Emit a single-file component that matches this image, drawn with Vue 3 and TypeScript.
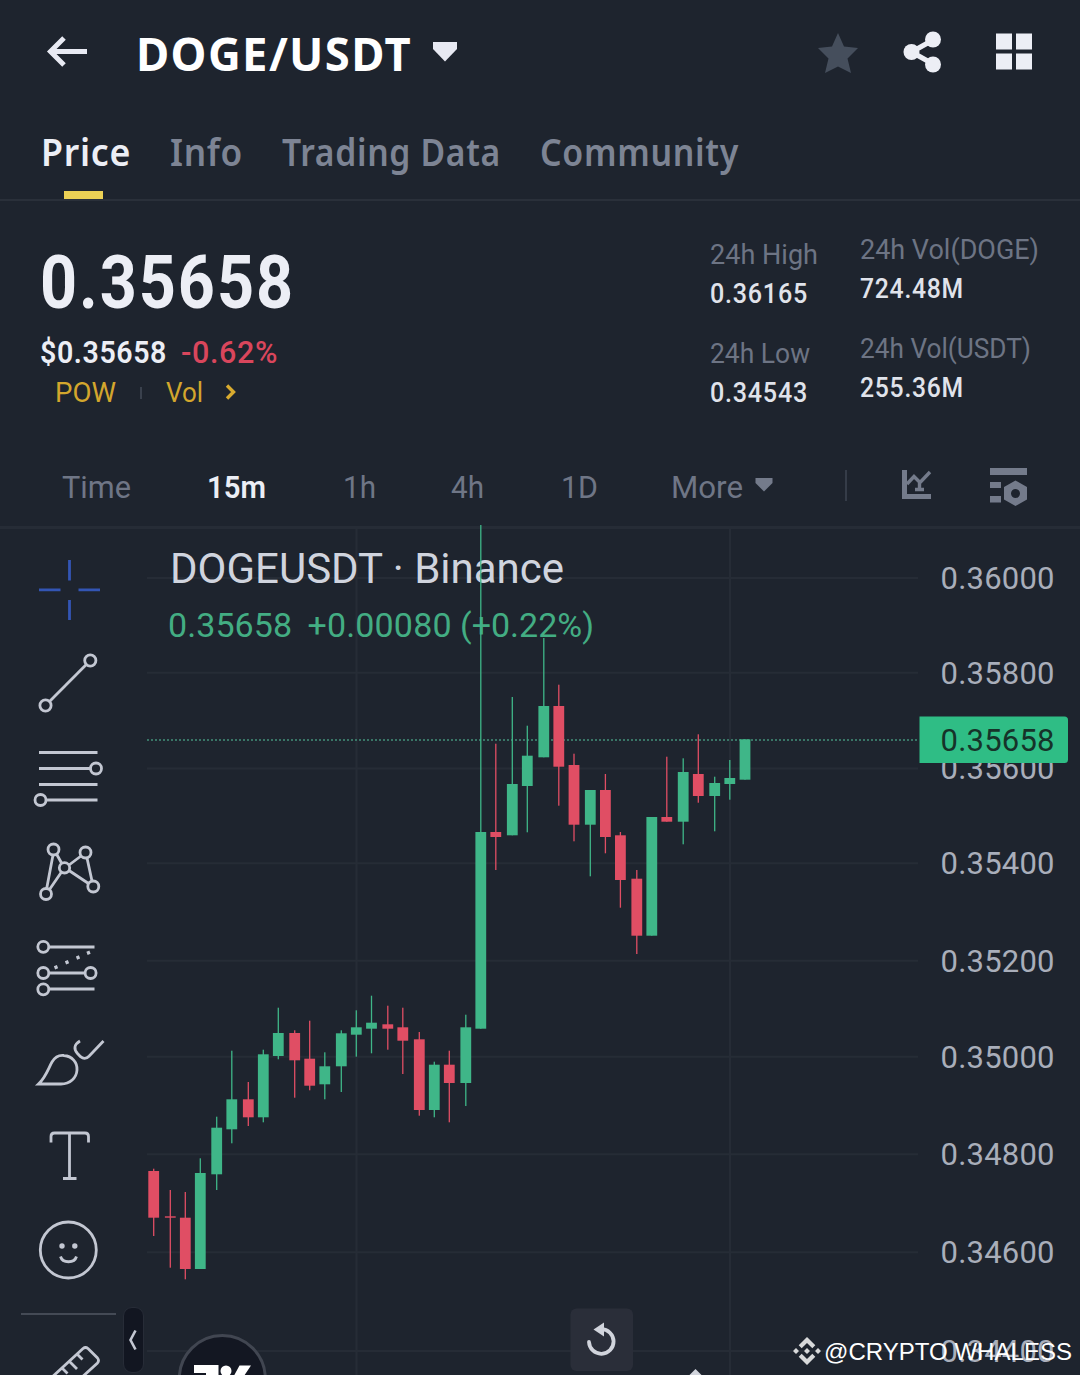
<script setup lang="ts">
import type { Directive } from 'vue'

/* Condenses or widens a label so that it takes exactly the given width in the flow. */
const vFit: Directive<HTMLElement, number> = {
  mounted(el, { value }) {
    const natural = el.getBoundingClientRect().width
    if (!natural) return
    el.style.transform = `scaleX(${value / natural})`
    el.style.marginRight = `${value - natural}px`
  },
}

type Side = 'up' | 'down'
interface Candle { x: number; high: number; top: number; bottom: number; low: number; side: Side }

const rows: [number, number, number, number, number, Side][] = [
  [153.7, 1168.7, 1171, 1217.7, 1236, 'down'],
  [170.3, 1190, 1216.3, 1217.7, 1267.7, 'down'],
  [185.3, 1192, 1217.7, 1269, 1279.3, 'down'],
  [200.3, 1158.3, 1173, 1269, 1269, 'up'],
  [216.7, 1116.7, 1127.7, 1174.3, 1190, 'up'],
  [231.8, 1050.7, 1099.3, 1129.3, 1143.3, 'up'],
  [248.3, 1082, 1099.3, 1117.3, 1126, 'down'],
  [263.3, 1049.7, 1054.3, 1117.3, 1122.3, 'up'],
  [278.3, 1007.7, 1033, 1056, 1059.3, 'up'],
  [294.7, 1030.3, 1033, 1060.3, 1097.7, 'down'],
  [309.7, 1020.7, 1058.7, 1085.7, 1090.3, 'down'],
  [324.8, 1052.3, 1066.3, 1084.3, 1099.3, 'up'],
  [341.3, 1030.3, 1033.3, 1066.3, 1092, 'up'],
  [356.3, 1010.3, 1027.3, 1034.7, 1056.7, 'up'],
  [371.5, 995.7, 1022.7, 1028.7, 1053.3, 'up'],
  [387.8, 1005.7, 1024.3, 1028.7, 1049.7, 'down'],
  [402.8, 1007.7, 1027.3, 1040.7, 1074, 'down'],
  [419.3, 1032, 1039.3, 1110, 1115.7, 'down'],
  [434.3, 1061.7, 1064.7, 1110, 1117.3, 'up'],
  [449.3, 1050.7, 1064.7, 1083, 1122.3, 'down'],
  [465.8, 1014.7, 1027.3, 1083, 1106, 'up'],
  [480.8, 525, 832, 1028.7, 1028.7, 'up'],
  [495.8, 743.7, 832, 837, 870, 'down'],
  [512.3, 697, 784, 835.3, 835.3, 'up'],
  [527.3, 725.7, 755.7, 786, 832.3, 'up'],
  [543.8, 638, 706, 757.3, 757.3, 'up'],
  [558.8, 684.7, 706, 766.7, 805.7, 'down'],
  [574, 753.7, 765, 824.7, 841.3, 'down'],
  [590.3, 790, 790, 824.7, 876.3, 'up'],
  [605.4, 774, 790, 837, 853.3, 'down'],
  [620.4, 832, 835.3, 880, 907.7, 'down'],
  [636.8, 870, 878.7, 935.7, 954, 'down'],
  [651.8, 817, 817, 935.7, 935.7, 'up'],
  [666.8, 756.7, 817, 821.7, 821.7, 'down'],
  [683.2, 758.3, 772, 821.7, 844.3, 'up'],
  [698.3, 734.3, 774, 796, 802.7, 'down'],
  [714.7, 776.7, 783, 796, 831.3, 'up'],
  [729.8, 760, 778, 784, 799.7, 'up'],
  [745, 739.3, 739.3, 779.7, 779.7, 'up'],
]
const candles: Candle[] = rows.map(([x, high, top, bottom, low, side]) => ({ x, high, top, bottom, low, side }))

const levels = [
  { y: 578, label: '0.36000' },
  { y: 672.7, label: '0.35800' },
  { y: 768.5, label: '0.35600' },
  { y: 863.3, label: '0.35400' },
  { y: 960.7, label: '0.35200' },
  { y: 1056.7, label: '0.35000' },
  { y: 1154.2, label: '0.34800' },
  { y: 1252.3, label: '0.34600' },
  { y: 1351, label: '0.34400' },
]
</script>

<template>
  <main class="screen">
    <header class="header">
      <svg class="back" viewBox="0 0 44 36" width="44" height="36">
        <path d="M41 17.500H5M18 4 4.500 17.500 18 31" />
      </svg>
      <h1 v-fit="276" class="title">DOGE/USDT</h1>
      <svg class="caret" viewBox="0 0 26 22" width="26" height="22">
        <path d="M1 1h24v7L13 20.500 1 8z" />
      </svg>
      <svg class="star" viewBox="0 0 42 44" width="42" height="44">
        <path d="M21 2l6 13.500 14 1.500-10.500 10.500L34 42l-13-6.500L8 42l3.500-14.500L1 17l14-1.500z" />
      </svg>
      <svg class="share" viewBox="0 0 42 44" width="42" height="44">
        <path d="M9.500 22 32 9.500M9.500 22 32 34.500" />
        <circle cx="9.500" cy="22" r="8" /><circle cx="31" cy="9.500" r="8" /><circle cx="31" cy="34.500" r="8" />
      </svg>
      <svg class="grid" viewBox="0 0 36 38" width="36" height="38">
        <path d="M0 .5h16v16H0zM20 .5h16v16H20zM0 20.500h16v16H0zM20 20.500h16v16H20z" />
      </svg>
    </header>

    <nav class="tabs">
      <a v-fit="90" class="active">Price</a>
      <a v-fit="73">Info</a>
      <a v-fit="219">Trading Data</a>
      <a v-fit="199">Community</a>
      <i class="marker"></i>
    </nav>

    <section class="summary">
      <div class="quote">
        <div class="last"><span v-fit="255">0.35658</span></div>
        <div class="change"><b v-fit="127">$0.35658</b><b v-fit="97" class="loss">-0.62%</b></div>
        <div class="tags">
          <span v-fit="61">POW</span><i></i><span v-fit="37">Vol</span>
          <svg viewBox="0 0 12 18" width="12" height="18"><path d="M2 2.500 8.500 9 2 15.500" /></svg>
        </div>
      </div>
      <dl class="stats first">
        <div><dt><span v-fit="108">24h High</span></dt><dd><span v-fit="98">0.36165</span></dd></div>
        <div><dt><span v-fit="100">24h Low</span></dt><dd><span v-fit="98">0.34543</span></dd></div>
      </dl>
      <dl class="stats second">
        <div><dt><span v-fit="179">24h Vol(DOGE)</span></dt><dd><span v-fit="104">724.48M</span></dd></div>
        <div><dt><span v-fit="171">24h Vol(USDT)</span></dt><dd><span v-fit="104">255.36M</span></dd></div>
      </dl>
    </section>

    <nav class="frames">
      <a v-fit="69" class="f-time">Time</a>
      <a v-fit="59" class="f-15m active">15m</a>
      <a v-fit="33" class="f-1h">1h</a>
      <a v-fit="33" class="f-4h">4h</a>
      <a v-fit="37" class="f-1d">1D</a>
      <a v-fit="72" class="f-more">More</a>
      <svg class="more-caret" viewBox="0 0 18 14" width="18" height="14"><path d="M.5 0h17v5L9 13.500.5 5z" /></svg>
      <i class="sep"></i>
      <svg class="indicators" viewBox="0 0 30 32" width="30" height="32">
        <path d="M2.500 1v26.500H29" stroke-width="5" />
        <path d="M5 15l7-7.500 6 6L28 3M17.500 12v9M13 20.500h9" stroke-width="3.400" />
      </svg>
      <svg class="settings" viewBox="0 0 38 40" width="38" height="40">
        <path d="M0 1h37v7H0zM0 15h11v6H0zM0 29h11v6.500H0z" />
        <path fill-rule="evenodd" d="M25.500 13.500 37 20v12.500L25.500 39 14 32.500V20zM25.500 22a4.500 4.500 0 1 0 0 9 4.500 4.500 0 0 0 0-9z" />
      </svg>
    </nav>

    <section class="workspace">
      <aside class="tools">
        <svg class="tool cross" viewBox="0 542 146 95"><path d="M69.500 560v20.500M69.500 600v20M39 589.800h21.500M78.500 589.800h21.500" /></svg>
        <svg class="tool" viewBox="0 637 146 95">
          <path d="M49.500 701.500 86.300 664.500" /><circle cx="90.300" cy="660.500" r="5.600" /><circle cx="45.500" cy="705.500" r="5.600" />
        </svg>
        <svg class="tool" viewBox="0 732 146 95">
          <path d="M39 752.500h58.500M39 768.500h51M39 784.500h58.500M46 800h51.500" /><circle cx="96" cy="768.500" r="5.500" /><circle cx="40.500" cy="800" r="5.500" />
        </svg>
        <svg class="tool" viewBox="0 827 146 95">
          <path d="M53 855 46.700 888.500M56.500 854l5 9M61.500 872 49.500 889.500M69 865l12-9M69 870.500l19.500 13M87 858l5 23" />
          <circle cx="53.500" cy="849.500" r="5.500" /><circle cx="85.500" cy="852.500" r="5.500" /><circle cx="64.500" cy="867.800" r="5.200" />
          <circle cx="46" cy="894" r="5.500" /><circle cx="93.300" cy="886.500" r="5.500" />
        </svg>
        <svg class="tool" viewBox="0 922 146 95">
          <path d="M49 947h45.500M49 973h36M49 989h45.500" />
          <path d="M54.500 967.800l3-1.200M65.500 962.800l3-1.200M76.500 958.100l3-1.200M87 953.300l3-1.200" stroke-width="3.400" />
          <circle cx="43.300" cy="946.800" r="5.500" /><circle cx="43.300" cy="973" r="5.500" /><circle cx="90.600" cy="973" r="5.500" /><circle cx="43.300" cy="989.300" r="5.500" />
        </svg>
        <svg class="tool" viewBox="0 1017 146 95">
          <path d="M38.500 1084C46 1077 48.500 1068 52 1062c3-5 8-7 12-6.500 8 .5 13.500 7 13 14.500-.5 8-7 14-16 14z" />
          <path d="M80 1041c-6 3.500-6.500 8-2.500 12.500l3 3.200c3 2.500 6 2 8.500-.5L103.500 1041" />
        </svg>
        <svg class="tool" viewBox="0 1112 146 95"><path d="M51 1142.500v-6q0-3.500 3.500-3.500h30.500q3.500 0 3.500 3.500v6M69.500 1133v45M63 1178.500h13.500" /></svg>
        <svg class="tool" viewBox="0 1207 146 95">
          <circle cx="68.300" cy="1250" r="28" /><path d="M60.500 1256.500c2 7 14 7 16 0" />
          <circle class="dot" cx="62" cy="1246" r="2.700" /><circle class="dot" cx="74.800" cy="1246" r="2.700" />
        </svg>
        <hr />
        <svg class="tool ruler" viewBox="0 1315 146 60">
          <path d="M50 1379 83 1348.500q2.500-2 5 0l9.500 9.500q2 2.500 0 5L80 1379M77 1354l5.500 5.500M69 1361l8 8M62 1368l5.500 5.500" />
        </svg>
      </aside>

      <svg class="chart" viewBox="146 526 934 849" width="934" height="849">
        <g class="lines">
          <path v-for="l in levels" :key="l.label" :d="`M147 ${l.y}H918`" />
          <path d="M356.500 529V1375M730 529V1375" />
        </g>
        <text class="name" x="170" y="583" textLength="394">DOGEUSDT · Binance</text>
        <g class="delta">
          <text x="168" y="637.300" textLength="124">0.35658</text>
          <text x="307.500" y="637.300" textLength="144">+0.00080</text>
          <text x="460" y="637.300" textLength="134">(+0.22%)</text>
        </g>
        <path class="last-line" d="M147 740H919" />
        <g v-for="c in candles" :key="c.x" :class="c.side">
          <rect :x="c.x - 0.65" :y="c.high" width="1.300" :height="c.low - c.high" />
          <rect :x="c.x - 5.4" :y="c.top" width="10.800" :height="c.bottom - c.top" />
        </g>
        <g class="axis">
          <text v-for="l in levels" :key="l.label" x="940.500" :y="l.y + 10.8" textLength="114">{{ l.label }}</text>
        </g>
        <path class="tag" d="M919.500 716.500h145q3.500 0 3.500 3.500v39.500q0 3.500-3.500 3.500h-145z" />
        <text class="tag-text" x="940.500" y="751" textLength="114">0.35658</text>

        <circle class="tv" cx="222.300" cy="1378.500" r="43" />
        <path class="white" d="M194 1365h24.500v12H206v-4h-12zM239.500 1365.500H251l-8 12h-10z" /><circle class="white" cx="226" cy="1371" r="5.500" />
        <rect class="reset" x="570.500" y="1308.500" width="62.500" height="62.500" rx="6" />
        <path class="reset-arc" d="M589 1342a12.300 12.300 0 1 0 12.300-12.800" />
        <path class="reset-head" d="M593.500 1329.500 604 1322.500v14z" />
        <path class="reset-head" d="M695.500 1369l8 8h-16z" />
      </svg>

      <button class="collapse">
        <svg viewBox="0 0 10 22" width="10" height="22"><path d="M7.500 1.500 2.500 11l5 9.500" /></svg>
      </button>
      <div class="watermark">
        <svg viewBox="0 0 28 28" width="28" height="28">
          <path d="M14 0l8.300 8.300-3 3L14 6 8.700 11.300l-3-3zM14 28l8.300-8.300-3-3L14 22l-5.300-5.300-3 3zM14 11l3 3-3 3-3-3zM3 11l3 3-3 3-3-3zM25 11l3 3-3 3-3-3z" />
        </svg>
        <span v-fit="248">@CRYPTO WHALESS</span>
      </div>
    </section>
  </main>
</template>

<style>
body { margin: 0; background: #1e242e; }
</style>

<style scoped>
.screen { width: 1080px; height: 1375px; overflow: hidden; background: #1e242e; color: #eceef5; font-family: Roboto, "Liberation Sans", sans-serif; }
.header, .tabs, .summary, .frames, .change, .tags { display: flex; align-items: center; white-space: nowrap; }
svg { display: block; flex: none; }
span, a, b, h1 { transform-origin: 0 50%; }
span, a, b { display: inline-block; flex: none; }

.header { height: 104px; padding-left: 46px; box-sizing: border-box; font-family: "Noto Sans", sans-serif; }
.back { fill: none; stroke: #e8eaf3; stroke-width: 5; }
.title { flex: none; margin: 0 0 0 46px; padding-top: 2px; font-size: 47px; font-weight: 700; line-height: 104px; letter-spacing: 0.03em; color: #fff; }
.caret { margin-left: 20px; fill: #e8eaf3; }
.star { margin-left: 359px; margin-top: 1px; fill: #454e5c; }
.share { margin-left: 43px; fill: #eceef5; }
.share path { stroke: #eceef5; stroke-width: 5; }
.grid { margin-left: 52px; fill: #eceef5; }

.tabs { position: relative; height: 95px; padding: 0 0 1px 41px; box-sizing: border-box; box-shadow: 0 2px #2a303a; font: 600 38px/92px "Noto Sans", sans-serif; letter-spacing: 0.02em; color: #7d8494; gap: 39px; }
.tabs .active { color: #eceef5; }
.marker { position: absolute; left: 64px; top: 87px; width: 39px; height: 8px; background: #ecd155; }

.summary { height: 250px; align-items: flex-start; box-sizing: border-box; padding: 43.5px 0 0 40px; }
.quote { width: 670px; }
.last { height: 80px; margin-bottom: 10px; font-size: 74px; font-weight: 700; line-height: 79px; letter-spacing: 0.03em; }
.change { height: 40px; font-size: 31px; line-height: 40px; gap: 14px; letter-spacing: 0.02em; }
.change b { font-weight: 600; }
.change .loss { font-weight: 500; color: #d9465c; }
.tags { height: 40px; padding-left: 15px; font-size: 28px; line-height: 39px; color: #d3a62d; }
.tags i { width: 2px; height: 12px; margin: 0 24px 0 24px; background: #3a414d; }
.tags svg { margin-left: 22px; margin-top: -1px; fill: none; stroke: #d9ab2f; stroke-width: 3.4; }
.stats { width: 150px; margin: -8px 0 0; }
.stats.second { width: 200px; margin-top: -12.5px; }
.stats > div { height: 99px; }
.stats dt { height: 40px; font-size: 28px; line-height: 40px; color: #6d7484; }
.stats dd { margin: 0; height: 39px; font-size: 27px; font-weight: 500; line-height: 39px; letter-spacing: 0.03em; color: #e0e3eb; }

.frames { height: 77px; font-size: 31px; line-height: 77px; color: #6f7686; }
.frames .active { color: #eceef5; font-weight: 600; }
.f-time { margin-left: 62px; }
.f-15m { margin-left: 76px; }
.f-1h { margin-left: 77px; }
.f-4h { margin-left: 75px; }
.f-1d { margin-left: 77px; }
.f-more { margin-left: 73px; }
.more-caret { margin-left: 12px; margin-top: -6px; fill: #747b8b; }
.sep { width: 2px; height: 31px; margin: -4px 0 0 72px; background: #353c48; }
.indicators { margin: -5px 0 0 55px; fill: none; stroke: #747b8b; }
.settings { margin: -1px 0 0 58px; fill: #747b8b; }

.workspace { position: relative; display: flex; height: 849px; }
.workspace::before { content: ""; position: absolute; top: 0; left: 0; right: 0; height: 3px; background: #262c36; }
.tools { width: 146px; padding-top: 16px; flex: none; }
.tool { width: 146px; height: 95px; fill: none; stroke: #c3c7d2; stroke-width: 2.8; }
.tool.cross { stroke: #3355b4; }
.tool .dot { fill: #c3c7d2; stroke: none; }
.tool.ruler { height: 60px; }
.tools hr { width: 95px; height: 2px; margin: 11px 0 0 21px; border: 0; background: #444a55; }
.chart { position: relative; overflow: visible; }
.lines path { fill: none; stroke: #262c36; stroke-width: 2; }
.name { font-size: 42px; fill: #d0d4de; }
.delta { font-size: 34px; fill: #43ad83; }
.last-line { fill: none; stroke: #43907a; stroke-width: 1.6; stroke-dasharray: 2 2; }
.up { fill: #3fb688; }
.down { fill: #e04e64; }
.axis { font-size: 31px; fill: #a9aeba; }
.tag { fill: #2fbd85; }
.tag-text { font-size: 31px; fill: #163329; }
.tv { fill: #131722; stroke: #414651; stroke-width: 3; }
.white { fill: #fff; }
.reset { fill: #2a2e39; }
.reset-arc { fill: none; stroke: #d1d4dc; stroke-width: 3.8; stroke-linecap: round; }
.reset-head { fill: #d1d4dc; }
.collapse { position: absolute; left: 123px; top: 781px; width: 21px; height: 66px; padding: 0 0 0 4px; box-sizing: border-box; border: 1px solid #272c37; border-radius: 9px; background: #121621; }
.collapse path { fill: none; stroke: #c3c7d2; stroke-width: 2.6; }
.watermark { position: absolute; left: 793px; top: 811px; height: 28px; display: flex; align-items: center; gap: 3px; font: 24px/28px "Liberation Sans", Arial, sans-serif; color: #fff; white-space: nowrap; }
.watermark span { padding-top: 2px; }
.watermark svg { fill: #d8d9da; }
</style>
